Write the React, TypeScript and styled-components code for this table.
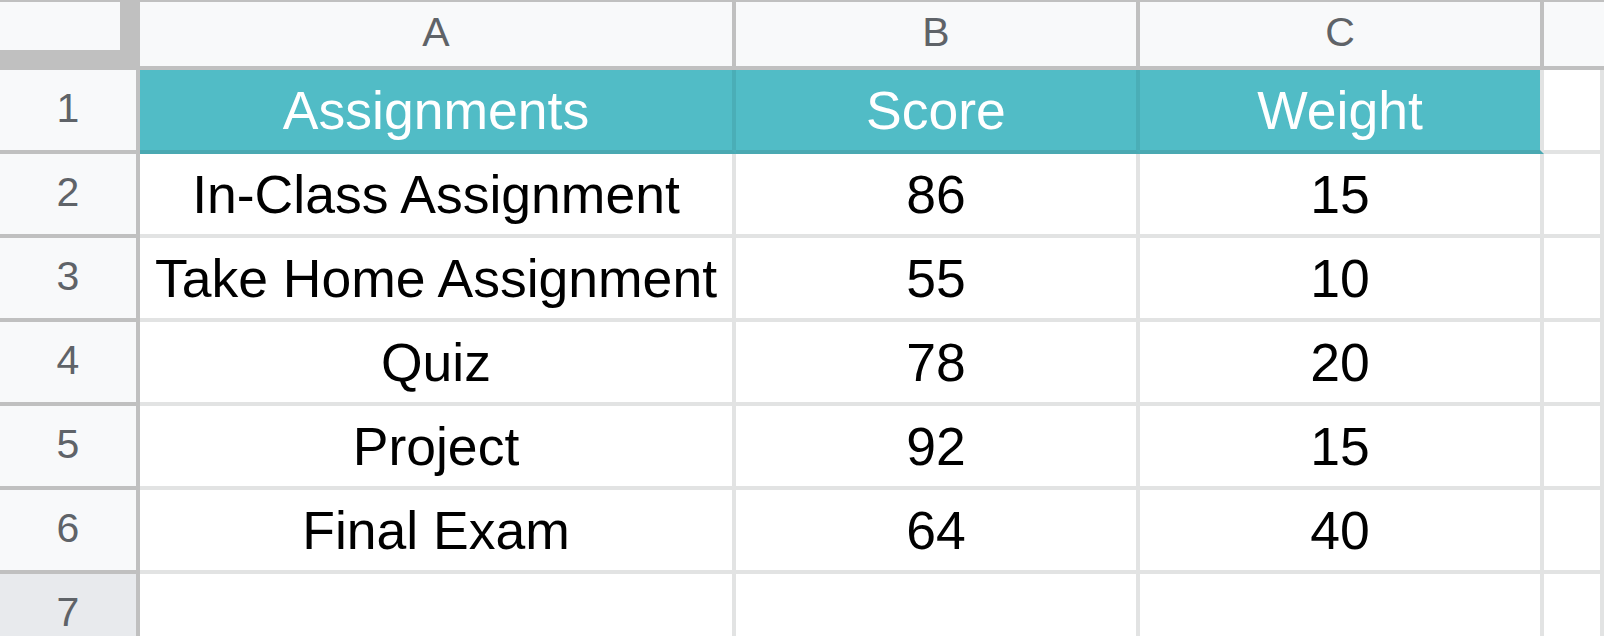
import React from "react";
import styled, { createGlobalStyle } from "styled-components";

const GlobalStyle = createGlobalStyle`
  html, body {
    margin: 0;
    padding: 0;
    background: #ffffff;
    overflow: hidden;
  }
`;

const columnLetters = ["A", "B", "C"];
const titles = ["Assignments", "Score", "Weight"];

const grades = [
    ["In-Class Assignment", "86", "15"],
    ["Take Home Assignment", "55", "10"],
    ["Quiz", "78", "20"],
    ["Project", "92", "15"],
    ["Final Exam", "64", "40"],
];

const App: React.FC = () => {
    return (
        <>
            <GlobalStyle />
            <Sheet>
                <Corner />
                {columnLetters.map((letter) => (
                    <ColumnHeader key={letter}>{letter}</ColumnHeader>
                ))}
                <ColumnHeader last />

                <RowHeader>1</RowHeader>
                {titles.map((title, i) => (
                    <TitleCell key={title} last={i === titles.length - 1}>
                        {title}
                    </TitleCell>
                ))}
                <Cell />

                {grades.map((row, r) => (
                    <React.Fragment key={row[0]}>
                        <RowHeader>{r + 2}</RowHeader>
                        {row.map((value, c) => (
                            <Cell key={c}>{value}</Cell>
                        ))}
                        <Cell />
                    </React.Fragment>
                ))}

                <RowHeader active>7</RowHeader>
                <Cell />
                <Cell />
                <Cell />
                <Cell />
            </Sheet>
        </>
    );
};

export default App;

const Sheet = styled.div`
    display: grid;
    grid-template-columns: 140px 596px 404px 404px 1fr;
    grid-template-rows: 68px;
    grid-auto-rows: 84px;
    width: 1604px;
    height: 636px;
    overflow: hidden;
    border-top: 2px solid #c0c0c0;
    box-sizing: border-box;
`;

const Corner = styled.div`
    background: #f8f9fa;
    border-right: 20px solid #c0c0c0;
    border-bottom: 20px solid #c0c0c0;
`;

const HeaderBase = styled.div`
    display: flex;
    align-items: center;
    justify-content: center;
    font-family: "Liberation Sans", Arial, sans-serif;
    font-size: 41px;
    color: #5f6368;
    border-bottom: 4px solid #c0c0c0;
    padding-bottom: 3px;
    box-sizing: border-box;
`;

const ColumnHeader = styled(HeaderBase)<{ last?: boolean }>`
    background: #f8f9fa;
    border-right: ${({ last }) => (last ? "none" : "4px solid #c0c0c0")};
`;

const RowHeader = styled(HeaderBase)<{ active?: boolean }>`
    background: ${({ active }) => (active ? "#e8eaed" : "#f8f9fa")};
    border-right: 4px solid #c0c0c0;
    padding-bottom: 4px;
`;

const Cell = styled.div`
    display: flex;
    align-items: center;
    justify-content: center;
    font-family: "Liberation Sans", Arial, sans-serif;
    font-size: 53.5px;
    color: #000000;
    background: #ffffff;
    border-right: 4px solid #e2e3e3;
    border-bottom: 4px solid #e2e3e3;
    box-sizing: border-box;
    white-space: nowrap;
`;

const TitleCell = styled(Cell)<{ last?: boolean }>`
    background: #51bcc6;
    color: #ffffff;
    border-right: 4px solid ${({ last }) => (last ? "#e2e3e3" : "#4aaeb7")};
    border-bottom: 4px solid #4aa9b2;
`;
